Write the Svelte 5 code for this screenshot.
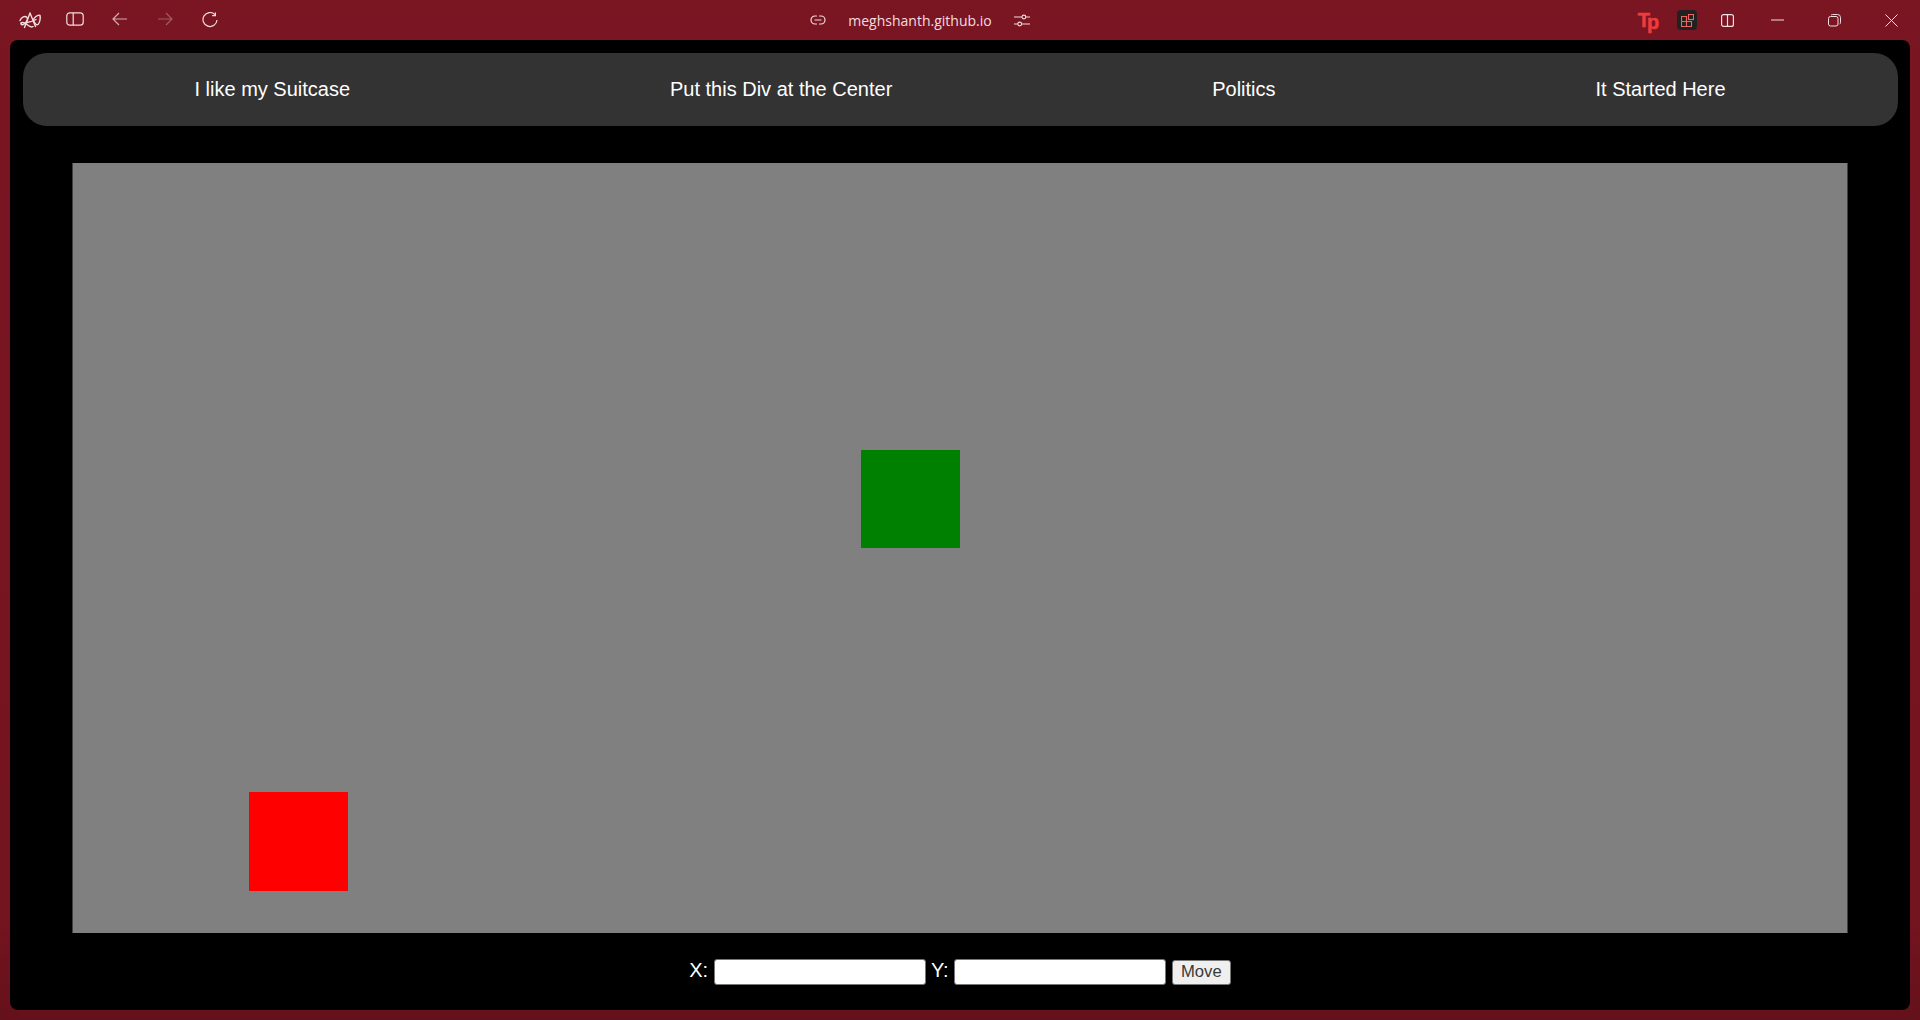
<script lang="ts">
  const links = ["I like my Suitcase", "Put this Div at the Center", "Politics", "It Started Here"];

  let xVal = $state("");
  let yVal = $state("");
  let red = $state({ x: 176, y: 629 });

  function move() {
    const x = parseFloat(xVal);
    const y = parseFloat(yVal);
    if (!isNaN(x) && !isNaN(y)) red = { x, y };
  }
</script>

<div class="shell">
  <header class="titlebar">
    <div class="tools">
      <span class="tool">
        <svg width="22" height="17" viewBox="0 0 22 17" fill="none" stroke="currentColor" stroke-width="1.4" stroke-linecap="round" stroke-linejoin="round">
          <path d="M5.5 15.5 L11 1 L16.5 14.5" />
          <path d="M8 10.5 C11 10 14 9.5 17 7.5" />
          <path d="M1 8.5 C2.5 5 6 3.5 8 5.5 C10 8 4 15 2 12 C1 10 5 10 8 12.5 C10.5 14.5 12 16 14 14.5" />
          <path d="M21 3.5 C18.5 2.5 14 6 14.5 8.5 C15 10.5 18 14.5 19.5 12 C21 9.5 21.5 6 21 3.5 Z" />
        </svg>
      </span>
      <span class="tool">
        <svg width="18" height="14" viewBox="0 0 18 14" fill="none" stroke="currentColor" stroke-width="1.2">
          <rect x="0.8" y="0.8" width="16.4" height="12.4" rx="3" />
          <path d="M7.2 1v12" />
        </svg>
      </span>
      <span class="tool dim1">
        <svg width="16" height="14" viewBox="0 0 16 14" fill="none" stroke="currentColor" stroke-width="1.2">
          <path d="M15 7H1.2M7 1 1 7l6 6" />
        </svg>
      </span>
      <span class="tool dim2">
        <svg width="16" height="14" viewBox="0 0 16 14" fill="none" stroke="currentColor" stroke-width="1.2">
          <path d="M1 7h13.8M9 1l6 6-6 6" />
        </svg>
      </span>
      <span class="tool">
        <svg width="16" height="16" viewBox="0 0 16 16" fill="none" stroke="currentColor" stroke-width="1.2">
          <path d="M13 2.6A7 7 0 1 0 15 8" />
          <path d="M13.4 0.5v3.2h-3.2" />
        </svg>
      </span>
    </div>

    <div class="address">
      <svg width="16" height="10" viewBox="0 0 16 10" fill="none" stroke="currentColor" stroke-width="1.2" stroke-linecap="round">
        <path d="M6.5 1H5a4 4 0 0 0 0 8h1.5M9.5 1H11a4 4 0 0 1 0 8H9.5M5 5h6" />
      </svg>
      <span class="host">meghshanth.github.io</span>
      <svg width="16" height="13" viewBox="0 0 16 13" fill="none" stroke="currentColor" stroke-width="1.1">
        <path d="M0 3h8M11.8 3h4.2M0 10h3.8M7.6 10h8.4" />
        <circle cx="9.9" cy="3" r="1.9" />
        <circle cx="5.7" cy="10" r="1.9" />
      </svg>
    </div>

    <div class="right">
      <span class="ext tp">T<i>p</i></span>
      <span class="ext">
        <span class="ext-box">
          <svg width="13" height="13" viewBox="0 0 13 13" fill="none" stroke="#f0645f" stroke-width="1.1">
            <rect x="7.5" y="0.5" width="5" height="5" />
            <path d="M0.5 2.5h5v10h-5zM0.5 7.5h5M5.5 7.5h5v5h-5" />
          </svg>
        </span>
      </span>
      <span class="ext split">
        <svg width="13" height="13" viewBox="0 0 13 13" fill="none" stroke="currentColor" stroke-width="1.2">
          <rect x="0.6" y="0.6" width="11.8" height="11.8" rx="2" />
          <path d="M6.5 1v11" />
        </svg>
      </span>
      <span class="win">
        <svg width="13" height="2" viewBox="0 0 13 2"><path d="M0 1h13" stroke="currentColor" stroke-width="1" /></svg>
      </span>
      <span class="win">
        <svg width="13" height="13" viewBox="0 0 13 13" fill="none" stroke="currentColor" stroke-width="1">
          <rect x="0.5" y="2.5" width="9.5" height="9.5" rx="2" />
          <path d="M3 1.2C3.4 .7 4 .5 4.6 .5H9.5A3 3 0 0 1 12.5 3.5V8.5C12.5 9.2 12.2 9.8 11.6 10.2" />
        </svg>
      </span>
      <span class="win">
        <svg width="13" height="13" viewBox="0 0 13 13" fill="none" stroke="currentColor" stroke-width="1"><path d="M.5.5l12 12M12.5.5l-12 12" /></svg>
      </span>
    </div>
  </header>

  <main class="page">
    <nav class="nav">
      {#each links as link}
        <a href="#top">{link}</a>
      {/each}
    </nav>

    <div class="stage">
      <div class="box green"></div>
      <div class="box red" style="left: {red.x}px; top: {red.y}px"></div>
    </div>

    <div class="controls">
      <label for="x">X:</label>
      <input id="x" type="text" bind:value={xVal} />
      <label for="y">Y:</label>
      <input id="y" type="text" bind:value={yVal} />
      <button onclick={move}>Move</button>
    </div>
  </main>
</div>

<style>
  :global(body) {
    margin: 0;
    background: #78141f;
  }

  .shell {
    height: 1020px;
    display: flex;
    flex-direction: column;
    overflow: hidden;
    background: linear-gradient(180deg, #7a1522 0%, #74141f 90%, #64111c 100%);
    font-family: "Liberation Sans", Arial, sans-serif;
  }

  .titlebar {
    height: 40px;
    flex: none;
    display: grid;
    grid-template-columns: auto 1fr auto;
    align-items: center;
    color: #f2dde0;
  }

  .tools {
    display: flex;
    padding-left: 7px;
  }

  .tool {
    width: 45px;
    display: flex;
    justify-content: center;
  }

  .dim1 { opacity: 0.75; }
  .dim2 { opacity: 0.35; }

  .address {
    display: flex;
    align-items: center;
    justify-content: center;
    gap: 22px;
    padding-right: 19px;
  }

  .host {
    font-family: "Open Sans", "Noto Sans", sans-serif;
    font-size: 14px;
  }

  .right {
    display: flex;
    align-items: center;
  }

  .ext {
    width: 40px;
    display: flex;
    justify-content: center;
  }

  .split {
    margin-right: 2px;
  }

  .tp {
    color: #ef3b3b;
    font-size: 20px;
    font-weight: 700;
    line-height: 1;
    letter-spacing: -3px;
    -webkit-text-stroke: 0.5px #ef3b3b;
  }

  .tp i {
    font-style: normal;
    position: relative;
    top: 2px;
  }

  .ext-box {
    width: 20px;
    height: 20px;
    border-radius: 4px;
    background: #212121;
    display: flex;
    align-items: center;
    justify-content: center;
  }

  .win {
    width: 57px;
    display: flex;
    justify-content: center;
  }

  .page {
    flex: 1;
    margin: 0 10px 10px;
    background: #000;
    border-radius: 8px;
    overflow: hidden;
    color: #fff;
  }

  .nav {
    margin: 13px 12.5px 0;
    height: 73px;
    padding: 0 12px;
    background: #333;
    border-radius: 24px;
    display: flex;
    align-items: center;
    justify-content: space-around;
  }

  .nav a {
    color: #fff;
    text-decoration: none;
    font-size: 20px;
    white-space: nowrap;
  }

  .stage {
    position: relative;
    height: 770px;
    margin: 37px 62px 0;
    background: #808080;
    border-left: 1px solid #404040;
    border-right: 1px solid #404040;
  }

  .box {
    position: absolute;
  }

  .green {
    left: 788px;
    top: 287px;
    width: 99px;
    height: 98px;
    background: #008000;
  }

  .red {
    width: 98.5px;
    height: 99px;
    background: #f00;
  }

  .controls {
    padding-top: 26px;
    text-align: center;
    font-size: 20px;
  }

  .controls input {
    box-sizing: border-box;
    width: 212px;
    height: 26px;
    margin: 0;
    padding: 1px 2px;
    background: #fff;
    border: 1px solid #767676;
    border-radius: 3px;
    font: 16.67px "Liberation Sans", Arial, sans-serif;
  }

  .controls button {
    box-sizing: border-box;
    width: 59px;
    height: 25px;
    margin: 0;
    padding: 0;
    background: #efefef;
    color: #3a3a3a;
    border: 1px solid #767676;
    border-radius: 3px;
    font: 16.67px "Liberation Sans", Arial, sans-serif;
  }
</style>
